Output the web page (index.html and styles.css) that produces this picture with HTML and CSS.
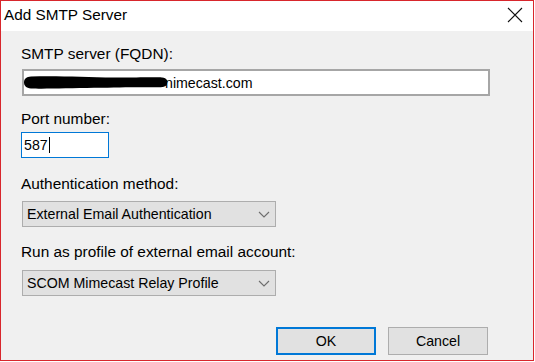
FILE: index.html
```html
<!DOCTYPE html>
<html>
<head>
<meta charset="utf-8">
<title>Add SMTP Server</title>
<link rel="stylesheet" href="styles.css">
</head>
<body>
<div class="window">
  <div class="titlebar">
    <span class="title">Add SMTP Server</span>
    <svg class="close" width="16" height="16" viewBox="0 0 16 16"><path d="M1 1L15 15M15 1L1 15" stroke="#111" stroke-width="1.1" fill="none"/></svg>
  </div>
  <div class="content">
    <div class="label l1">SMTP server (FQDN):</div>
    <div class="textbox wide">
      <svg class="blob" width="144" height="15" viewBox="0 0 144 15"><path d="M7 1.5 C30 0.5 60 2 90 2.5 C110 2.8 130 2 138 2.5 C143 3 144 6 143 9 C142 12 138 12.5 130 12.3 C110 12 95 12.5 70 12.8 C45 13.2 20 14 7 13.5 C2 13 0 10.5 0 7.5 C0 4 2.5 1.7 7 1.5 Z" fill="#000"/></svg><span class="tb-text">nimecast.com</span>
    </div>
    <div class="label l2">Port number:</div>
    <div class="textbox port"><span class="tb-text">587</span><span class="caret"></span></div>
    <div class="label l3">Authentication method:</div>
    <div class="select s1"><span>External Email Authentication</span>
      <svg class="chev" width="12" height="7" viewBox="0 0 12 7"><path d="M1 1L6 6L11 1" stroke="#6d6d6d" stroke-width="1.1" fill="none"/></svg></div>
    <div class="label l4">Run as profile of external email account:</div>
    <div class="select s2"><span>SCOM Mimecast Relay Profile</span>
      <svg class="chev" width="12" height="7" viewBox="0 0 12 7"><path d="M1 1L6 6L11 1" stroke="#6d6d6d" stroke-width="1.1" fill="none"/></svg></div>
    <div class="buttons">
      <div class="btn ok">OK</div>
      <div class="btn">Cancel</div>
    </div>
  </div>
</div>
</body>
</html>
```
FILE: styles.css
```css
html, body {
  margin: 0;
  padding: 0;
  background: #ffffff;
}
body {
  width: 535px;
  height: 362px;
  overflow: hidden;
  font-family: "Liberation Sans", Arial, sans-serif;
  color: #000;
}
.window {
  width: 534px;
  height: 361px;
  box-sizing: border-box;
  border: 1px solid #d8262c;
  display: flex;
  flex-direction: column;
}
.titlebar {
  height: 30px;
  background: #fff;
  display: flex;
  align-items: center;
  padding-left: 3px;
  padding-right: 10px;
}
.title {
  font-size: 15.3px;
  flex: 1;
  position: relative;
  top: -1px;
}
.close {
  display: block;
  margin-top: -2px;
}
.content {
  flex: 1;
  background: #f0f0f0;
  padding: 14px 0 0 20px;
  display: flex;
  flex-direction: column;
  align-items: flex-start;
}
.label {
  font-size: 15.4px;
  line-height: 18px;
  height: 18px;
  white-space: nowrap;
}
.l2 { margin-top: 14px; }
.l3 { margin-top: 17px; }
.l4 { margin-top: 16px; }
.textbox {
  box-sizing: border-box;
  background: #fff;
  display: flex;
  align-items: center;
  font-size: 14.2px;
  white-space: nowrap;
}
.wide {
  margin-top: 6px;
  margin-left: 1px;
  width: 468px;
  height: 27px;
  border: 2px solid #a6a6a6;
  padding-left: 0;
}
.blob {
  display: block;
  flex: none;
  margin-right: -3px;
  position: relative;
  z-index: 1;
}
.port {
  margin-top: 4px;
  width: 88px;
  height: 26px;
  border: 1px solid #0078d7;
  padding-left: 2px;
}
.caret {
  display: inline-block;
  width: 1px;
  height: 16px;
  background: #000;
  margin-left: 1px;
}
.select {
  box-sizing: border-box;
  width: 254px;
  height: 26px;
  margin-left: 1px;
  background: #e1e1e1;
  border: 1px solid #adadad;
  display: flex;
  align-items: center;
  justify-content: space-between;
  padding: 0 5px 0 4px;
  font-size: 14.2px;
  white-space: nowrap;
}
.s1 { margin-top: 8px; }
.s2 { margin-top: 9px; }
.chev { display: block; }
.buttons {
  align-self: stretch;
  display: flex;
  justify-content: flex-end;
  gap: 12px;
  margin-top: 31px;
  padding-right: 45px;
}
.btn {
  box-sizing: border-box;
  width: 100px;
  height: 28px;
  background: #e1e1e1;
  border: 1px solid #adadad;
  display: flex;
  align-items: center;
  justify-content: center;
  font-size: 14.2px;
}
.ok {
  border: 2px solid #0078d7;
}
```
